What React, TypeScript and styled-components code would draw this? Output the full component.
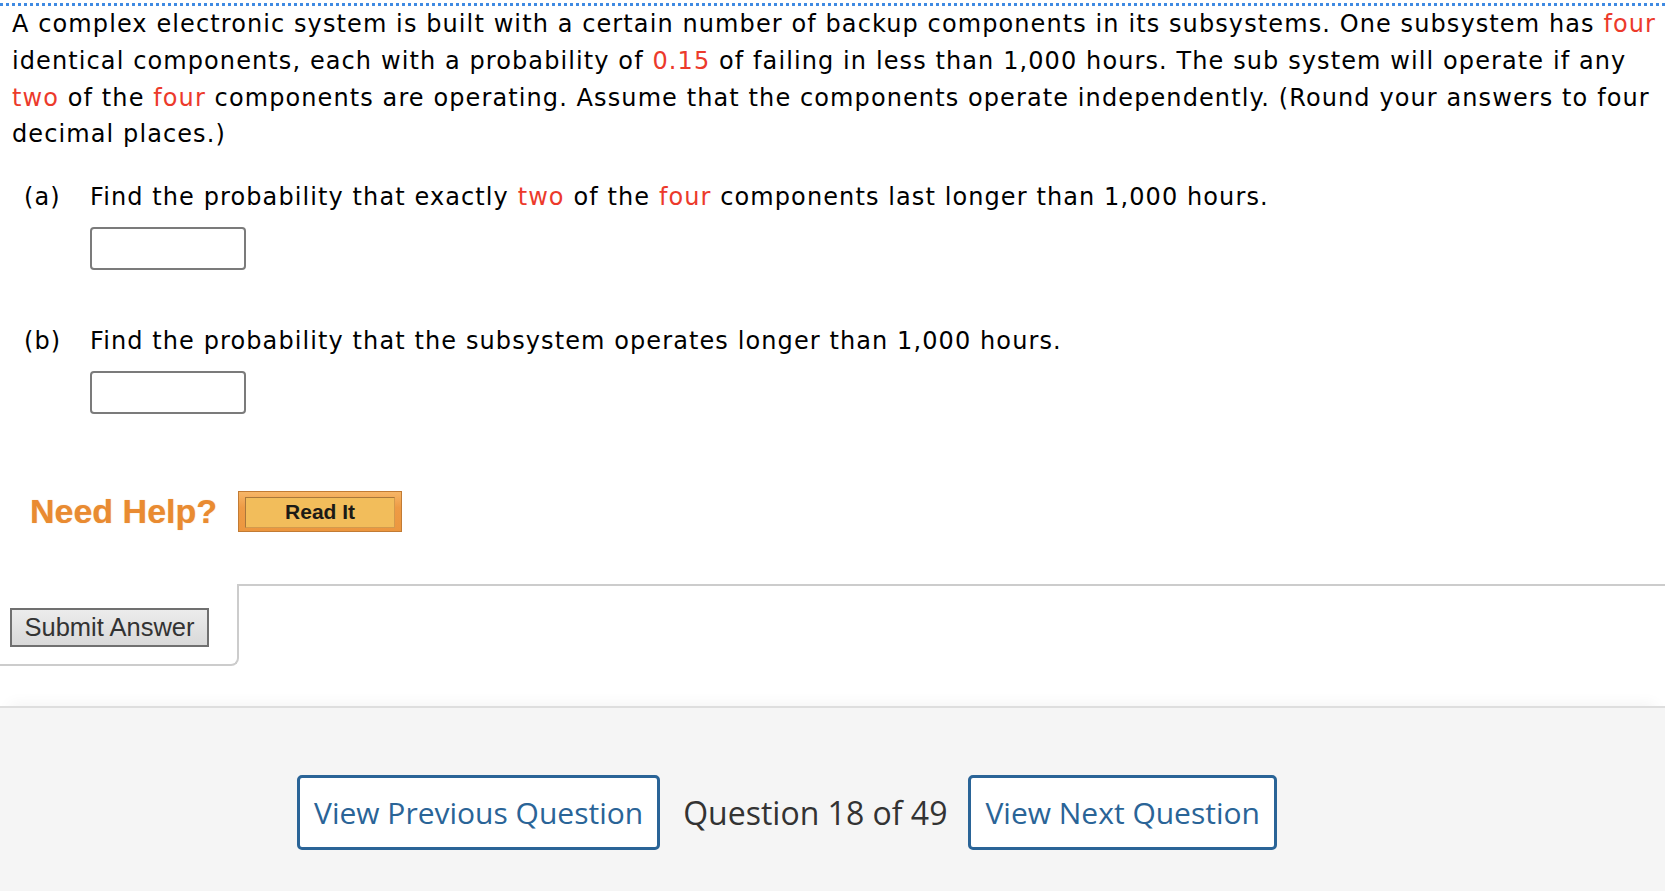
import styled, { createGlobalStyle } from 'styled-components';

const GlobalStyle = createGlobalStyle`
  html, body {
    margin: 0;
    padding: 0;
    background: #fff;
  }
`;

const Page = styled.div`
  display: flex;
  flex-direction: column;
  min-height: 100vh;
  padding-top: 3px;
  box-sizing: border-box;
`;

const QuestionBox = styled.div`
  border-top: 3px dotted #3f8ae2;
  padding: 0 4px 0 12px;
  font-family: "DejaVu Sans", Verdana, sans-serif;
  font-size: 24px;
  letter-spacing: 1.1px;
  line-height: 36.8px;
  color: #000;
`;

const Prompt = styled.p`
  margin: 0;
`;

const Red = styled.span`
  color: #ec3a2b;
`;

const Part = styled.div<{ $top: number }>`
  display: grid;
  grid-template-columns: 66px 1fr;
  padding-left: 12px;
  margin-top: ${(p) => p.$top}px;
`;

const PartLabel = styled.span``;

const PartBody = styled.div`
  display: flex;
  flex-direction: column;
  align-items: flex-start;
`;

const AnswerInput = styled.input`
  width: 156px;
  height: 43px;
  box-sizing: border-box;
  margin-top: 11px;
  border: 2px solid #7b7b7b;
  border-radius: 4px;
  background: #fff;
  font-size: 20px;
`;

const HelpRow = styled.div`
  display: flex;
  align-items: center;
  gap: 21px;
  margin-top: 77px;
  padding-left: 18px;
  letter-spacing: normal;
`;

const HelpText = styled.span`
  font-family: "Liberation Sans", Arial, sans-serif;
  font-weight: bold;
  font-size: 34px;
  line-height: 40px;
  color: #e98b31;
  text-shadow: 0 0 1px rgba(233, 139, 49, 0.6);
`;

const ReadItButton = styled.button`
  width: 164px;
  height: 41px;
  box-sizing: border-box;
  padding: 5px 6px 3px 6px;
  border: 1px solid #c27b34;
  background: linear-gradient(#f7b667, #ee9b45 40%, #ec973f);
  cursor: pointer;
`;

const ReadItFace = styled.span`
  display: flex;
  align-items: center;
  justify-content: center;
  height: 100%;
  box-sizing: border-box;
  border: 1px solid #a9773b;
  border-bottom-color: #d49a4c;
  border-right-color: #d49a4c;
  background: #f2bd5b;
  font-family: "Liberation Sans", Arial, sans-serif;
  font-weight: bold;
  font-size: 21px;
  color: #1c1a16;
`;

const SubmitBar = styled.div`
  display: flex;
  margin-top: 52px;
`;

const SubmitCell = styled.div`
  width: 239px;
  box-sizing: border-box;
  padding: 24px 0 17px 10px;
  border-right: 2px solid #cccccc;
  border-bottom: 2px solid #cccccc;
  border-bottom-right-radius: 8px;
`;

const SubmitButton = styled.button`
  height: 39px;
  width: 199px;
  box-sizing: border-box;
  padding: 0;
  border: 2px solid #707070;
  background: linear-gradient(#ececec, #d9d9d9);
  font-family: "Liberation Sans", Arial, sans-serif;
  font-size: 25.5px;
  color: #333;
  cursor: pointer;
`;

const SubmitFill = styled.div`
  flex: 1;
  border-top: 2px solid #cccccc;
`;

const Footer = styled.footer`
  flex: 1;
  margin-top: 40px;
  border-top: 2px solid #dedede;
  background: #f5f5f5;
  box-shadow: 0 -12px 14px -10px rgba(0, 0, 0, 0.05);
`;

const Nav = styled.nav`
  display: flex;
  align-items: center;
  padding: 67px 0 0 297px;
  font-family: "Open Sans", sans-serif;
  font-size: 30px;
`;

const NavButton = styled.button`
  height: 75px;
  box-sizing: border-box;
  padding: 0 14px;
  border: 3px solid #2a6497;
  border-radius: 5px;
  background: #fff;
  color: #2a6497;
  font: inherit;
  cursor: pointer;
`;

const Counter = styled.span`
  margin: 0 21px 0 23px;
  font-size: 32px;
  color: #333;
`;

export default function App() {
  return (
    <Page>
      <GlobalStyle />
      <QuestionBox>
        <Prompt>
          A complex electronic system is built with a certain number of backup components in its
          subsystems. One subsystem has <Red>four</Red> identical components, each with a probability
          of <Red>0.15</Red> of failing in less than 1,000 hours. The sub system will operate if any{' '}
          <Red>two</Red> of the <Red>four</Red> components are operating. Assume that the components
          operate independently. (Round your answers to four decimal places.)
        </Prompt>
        <Part $top={26}>
          <PartLabel>(a)</PartLabel>
          <PartBody>
            <span>
              Find the probability that exactly <Red>two</Red> of the <Red>four</Red> components last
              longer than 1,000 hours.
            </span>
            <AnswerInput type="text" />
          </PartBody>
        </Part>
        <Part $top={53}>
          <PartLabel>(b)</PartLabel>
          <PartBody>
            <span>Find the probability that the subsystem operates longer than 1,000 hours.</span>
            <AnswerInput type="text" />
          </PartBody>
        </Part>
        <HelpRow>
          <HelpText>Need Help?</HelpText>
          <ReadItButton>
            <ReadItFace>Read It</ReadItFace>
          </ReadItButton>
        </HelpRow>
      </QuestionBox>
      <SubmitBar>
        <SubmitCell>
          <SubmitButton>Submit Answer</SubmitButton>
        </SubmitCell>
        <SubmitFill />
      </SubmitBar>
      <Footer>
        <Nav>
          <NavButton>View Previous Question</NavButton>
          <Counter>Question 18 of 49</Counter>
          <NavButton>View Next Question</NavButton>
        </Nav>
      </Footer>
    </Page>
  );
}
